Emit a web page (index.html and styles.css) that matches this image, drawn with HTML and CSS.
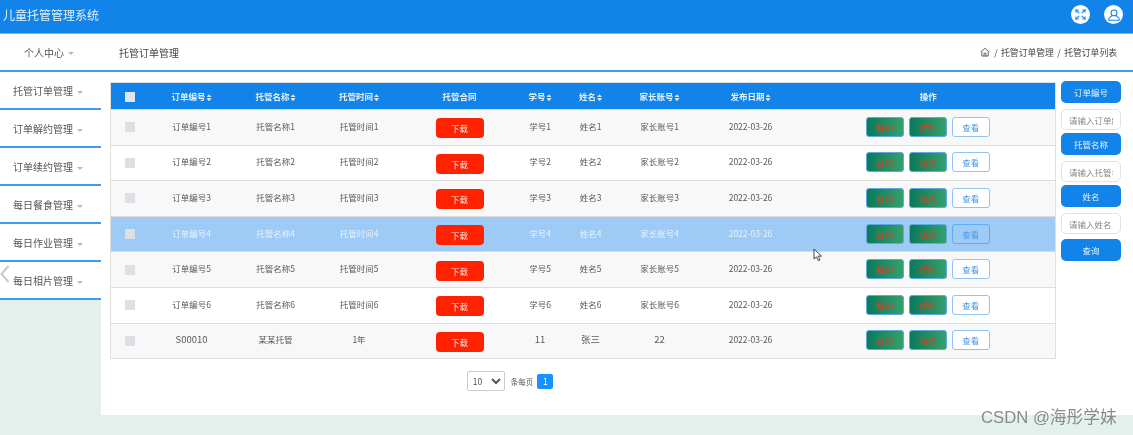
FILE: index.html
```html
<!DOCTYPE html>
<html lang="zh-CN">
<head>
    <meta charset="UTF-8" />
    <title>儿童托管管理系统</title>
    <link rel="stylesheet" href="styles.css">
</head>
<body>
<header class="topbar">
    <div class="brand">儿童托管管理系统</div>
    <div class="top-icons">
        <span class="round-icon">
            <svg viewBox="0 0 20 20" width="13" height="13" fill="none" stroke="#1283e8" stroke-width="1.6" stroke-linecap="round">
                <path d="M3 3l4.500 4.500M17 3l-4.500 4.500M3 17l4.500-4.500M17 17l-4.500-4.500" />
                <path d="M3 6.500V3h3.500M17 6.500V3h-3.500M3 13.500V17h3.500M17 13.500V17h-3.500" />
            </svg>
        </span>
        <span class="round-icon">
            <svg viewBox="0 0 20 20" width="14" height="14" fill="none" stroke="#1283e8" stroke-width="1.5" stroke-linejoin="round">
                <circle cx="10" cy="7" r="4.200" />
                <path d="M7 10.500c0 2-4.500 2.500-4.500 5.500v1.500h15V16c0-3-4.500-3.500-4.500-5.500" />
            </svg>
        </span>
    </div>
</header>

<div class="subbar">
    <div class="user-menu">个人中心<i class="caret"></i></div>
    <div class="page-title">托管订单管理</div>
    <div class="crumbs">
        <svg viewBox="0 0 16 16" width="10" height="10" fill="none" stroke="#555" stroke-width="1.400">
            <path d="M1 8l7-6 7 6M3 7v7.500h10V7M6.500 14.500V10h3v4.500" />
        </svg>
        <span>/ 托管订单管理 / 托管订单列表</span>
    </div>
</div>

<div class="layout">
    <aside class="sidebar">
        <div class="side-item">托管订单管理<i class="caret"></i></div>
        <div class="side-item">订单解约管理<i class="caret"></i></div>
        <div class="side-item">订单续约管理<i class="caret"></i></div>
        <div class="side-item">每日餐食管理<i class="caret"></i></div>
        <div class="side-item">每日作业管理<i class="caret"></i></div>
        <div class="side-item">每日相片管理<i class="caret"></i></div>
    </aside>

    <main class="content">
        <div class="table-area">
            <table class="orders">
                <colgroup>
                    <col class="c-check"><col class="c-no"><col class="c-name"><col class="c-time"><col class="c-file">
                    <col class="c-sid"><col class="c-stu"><col class="c-parent"><col class="c-date"><col class="c-ops">
                </colgroup>
                <thead>
                    <tr>
                        <th><span class="check"></span></th>
                        <th>订单编号<i class="sort"></i></th>
                        <th>托管名称<i class="sort"></i></th>
                        <th>托管时间<i class="sort"></i></th>
                        <th>托管合同</th>
                        <th>学号<i class="sort"></i></th>
                        <th>姓名<i class="sort"></i></th>
                        <th>家长账号<i class="sort"></i></th>
                        <th>发布日期<i class="sort"></i></th>
                        <th>操作</th>
                    </tr>
                </thead>
                <tbody>
                    <tr>
                        <td><span class="check"></span></td><td>订单编号1</td><td>托管名称1</td><td>托管时间1</td>
                        <td><button class="btn-down">下载</button></td>
                        <td>学号1</td><td>姓名1</td><td>家长账号1</td><td>2022-03-26</td>
                        <td><div class="ops"><button class="btn-green">解约</button><button class="btn-green">续约</button><button class="btn-view">查看</button></div></td>
                    </tr>
                    <tr>
                        <td><span class="check"></span></td><td>订单编号2</td><td>托管名称2</td><td>托管时间2</td>
                        <td><button class="btn-down">下载</button></td>
                        <td>学号2</td><td>姓名2</td><td>家长账号2</td><td>2022-03-26</td>
                        <td><div class="ops"><button class="btn-green">解约</button><button class="btn-green">续约</button><button class="btn-view">查看</button></div></td>
                    </tr>
                    <tr>
                        <td><span class="check"></span></td><td>订单编号3</td><td>托管名称3</td><td>托管时间3</td>
                        <td><button class="btn-down">下载</button></td>
                        <td>学号3</td><td>姓名3</td><td>家长账号3</td><td>2022-03-26</td>
                        <td><div class="ops"><button class="btn-green">解约</button><button class="btn-green">续约</button><button class="btn-view">查看</button></div></td>
                    </tr>
                    <tr class="hovered">
                        <td><span class="check"></span></td><td>订单编号4</td><td>托管名称4</td><td>托管时间4</td>
                        <td><button class="btn-down">下载</button></td>
                        <td>学号4</td><td>姓名4</td><td>家长账号4</td><td>2022-03-26</td>
                        <td><div class="ops"><button class="btn-green">解约</button><button class="btn-green">续约</button><button class="btn-view">查看</button></div></td>
                    </tr>
                    <tr>
                        <td><span class="check"></span></td><td>订单编号5</td><td>托管名称5</td><td>托管时间5</td>
                        <td><button class="btn-down">下载</button></td>
                        <td>学号5</td><td>姓名5</td><td>家长账号5</td><td>2022-03-26</td>
                        <td><div class="ops"><button class="btn-green">解约</button><button class="btn-green">续约</button><button class="btn-view">查看</button></div></td>
                    </tr>
                    <tr>
                        <td><span class="check"></span></td><td>订单编号6</td><td>托管名称6</td><td>托管时间6</td>
                        <td><button class="btn-down">下载</button></td>
                        <td>学号6</td><td>姓名6</td><td>家长账号6</td><td>2022-03-26</td>
                        <td><div class="ops"><button class="btn-green">解约</button><button class="btn-green">续约</button><button class="btn-view">查看</button></div></td>
                    </tr>
                    <tr>
                        <td><span class="check"></span></td><td class="big">S00010</td><td>某某托管</td><td>1年</td>
                        <td><button class="btn-down">下载</button></td>
                        <td class="big">11</td><td class="big">张三</td><td class="big">22</td><td>2022-03-26</td>
                        <td><div class="ops"><button class="btn-green">解约</button><button class="btn-green">续约</button><button class="btn-view">查看</button></div></td>
                    </tr>
                </tbody>
            </table>

            <div class="pager">
                <select class="page-size"><option>10</option></select>
                <span class="pager-text">条每页</span>
                <span class="page-num">1</span>
            </div>
        </div>

        <div class="search">
            <div class="search-label">订单编号</div>
            <input class="search-input" placeholder="请输入订单编号">
            <div class="search-label">托管名称</div>
            <input class="search-input" placeholder="请输入托管名称">
            <div class="search-label">姓名</div>
            <input class="search-input" placeholder="请输入姓名">
            <button class="search-btn">查询</button>
        </div>
    </main>
</div>

<div class="collapse-arrow">
    <svg viewBox="0 0 10 18" width="10" height="18" fill="none" stroke="#c9cdcf" stroke-width="2.400"><path d="M8.500 1L1.500 9l7 8" /></svg>
</div>
<div class="mouse">
    <svg viewBox="0 0 10 14" width="10" height="14" fill="#fff" stroke="#444" stroke-width="1"><path d="M1 1v10l2.500-2.200 1.800 3.900 1.700-.8-1.800-3.800H8.500z" /></svg>
</div>
<div class="watermark">CSDN @海彤学妹</div>
</body>
</html>
```

FILE: styles.css
```css
* {
    box-sizing: border-box;
}

html, body {
    height: 100%;
}

body {
    margin: 0;
    overflow: hidden;
    display: flex;
    flex-direction: column;
    background-color: #e4f0ec;
    color: #5a5a5a;
    font-family: "Noto Sans CJK SC", "Open Sans", sans-serif;
    font-size: 8.5px;
}

/* the reference is a soft, rescaled capture */
body > * {
    filter: blur(0.45px);
}

.topbar {
    height: 34px;
    flex: none;
    display: flex;
    align-items: center;
    justify-content: space-between;
    padding: 0 10px 4px 3px;
    background-color: #1283e8;
    border-bottom: 1px solid #6db3f2;
}

.brand {
    color: #e4f1fc;
    font-size: 12px;
}

.top-icons {
    display: flex;
    gap: 14px;
}

.round-icon {
    width: 19px;
    height: 19px;
    display: flex;
    align-items: center;
    justify-content: center;
    background-color: #fff;
    border-radius: 50%;
}

.subbar {
    height: 38px;
    flex: none;
    display: flex;
    align-items: center;
    background-color: #fff;
    border-bottom: 2px solid #3d9bf0;
    font-size: 10px;
    color: #444;
}

.user-menu {
    width: 119px;
    padding-left: 24px;
    color: #555;
}

.crumbs {
    margin-left: auto;
    padding-right: 16px;
    display: flex;
    align-items: center;
    gap: 4px;
    font-size: 8.8px;
    word-spacing: 1.5px;
}

.caret {
    display: inline-block;
    margin-left: 4px;
    vertical-align: middle;
    border-top: 3px solid #bbb;
    border-left: 3px solid transparent;
    border-right: 3px solid transparent;
}

.layout {
    height: 343px;
    flex: none;
    display: flex;
}

.sidebar {
    width: 101px;
    flex: none;
}

.side-item {
    height: 38px;
    padding: 11px 0 0 13px;
    background-color: #fff;
    border-bottom: 2px solid #3d9bf0;
    font-size: 10px;
    color: #555;
}

.content {
    flex: 1;
    display: flex;
    gap: 6px;
    padding: 10px 12px 0 9px;
    background-color: #fff;
}

.table-area {
    width: 945px;
    flex: none;
}

.orders {
    width: 945px;
    table-layout: fixed;
    border-collapse: collapse;
    border: 1px solid #e0e0e0;
    text-align: center;
}

.c-check { width: 39px; }
.c-no { width: 84px; }
.c-name { width: 84px; }
.c-time { width: 83px; }
.c-file { width: 118px; }
.c-sid { width: 43px; }
.c-stu { width: 58px; }
.c-parent { width: 80px; }
.c-date { width: 102px; }
.c-ops { width: 254px; }

.orders th {
    height: 27px;
    padding: 0;
    background-color: #1283e8;
    color: #e4f1fc;
    font-weight: bold;
}

.orders td {
    height: 35.6px;
    padding: 0 0 3px;
    border-top: 1px solid #ddd;
}

.orders tbody tr:nth-child(odd) {
    background-color: #f8f8f8;
}

.orders tbody tr.hovered {
    background-color: #9dcbf5;
    color: #e6f2fc;
}

.big {
    font-size: 9.5px;
}

.check {
    display: inline-block;
    width: 10px;
    height: 10px;
    vertical-align: middle;
    background-color: #dcdfe4;
}

th .check {
    background-color: #e2e6ea;
}

.sort {
    display: inline-block;
    margin-left: 1px;
    vertical-align: middle;
    width: 5px;
    height: 7px;
    background: linear-gradient(#cfe6fb 0 3px, transparent 3px 4px, #cfe6fb 4px);
    clip-path: polygon(50% 0, 100% 40%, 60% 50%, 100% 60%, 50% 100%, 0 60%, 40% 50%, 0 40%);
}

button {
    font-family: inherit;
    font-size: 8.5px;
    padding: 0;
    cursor: pointer;
}

.btn-down {
    width: 48px;
    height: 20px;
    margin-top: 5px;
    vertical-align: middle;
    background-color: #ff2200;
    color: #fbe3dd;
    border: 0;
    border-radius: 4px;
}

.ops {
    display: flex;
    justify-content: center;
    gap: 5px;
    padding: 2px 1px 0 0;
}

.ops button {
    width: 38px;
    height: 20px;
    border-radius: 3px;
}

.btn-green {
    background: linear-gradient(90deg, #0a7a5c, #35a06c);
    border: 1px solid #5fa9df;
    color: #e83a1c;
}

.btn-view {
    background-color: #fff;
    border: 1.5px solid #8fc3f0;
    color: #4a9be6;
}

.hovered .btn-view {
    background-color: #9dcbf5;
    border-color: #62acec;
}

.pager {
    display: flex;
    align-items: center;
    justify-content: center;
    margin-top: 12px;
    padding-right: 145px;
}

.page-size {
    width: 38px;
    height: 20px;
    padding: 0 0 0 1px;
    font-family: inherit;
    font-size: 8.5px;
    color: #555;
    background-color: #fff;
    border: 1px solid #ccc;
    border-radius: 2px;
}

.pager-text {
    margin: 0 4px 0 6px;
    font-size: 7.5px;
}

.page-num {
    width: 16px;
    height: 15px;
    display: flex;
    align-items: center;
    justify-content: center;
    background-color: #1890ff;
    color: #fff;
    border-radius: 2px;
}

.search {
    width: 60px;
    flex: none;
    display: flex;
    flex-direction: column;
    margin-top: -1px;
}

.search-label,
.search-btn {
    height: 22px;
    flex: none;
    display: flex;
    align-items: center;
    justify-content: center;
    background-color: #1283e8;
    color: #e4f1fc;
    border: 0;
    border-radius: 5px;
    font-size: 8.5px;
}

.search-input {
    width: 60px;
    height: 21px;
    flex: none;
    margin: 6px 0 3px;
    padding: 0 7px;
    font-family: inherit;
    font-size: 8.5px;
    border: 1px solid #e2e2e2;
    border-radius: 5px;
    outline: none;
}

.search-input::placeholder {
    color: #888;
}

.search-btn {
    margin-top: 2px;
}

.collapse-arrow {
    position: absolute;
    left: 0;
    top: 265px;
}

.mouse {
    position: absolute;
    left: 813px;
    top: 248px;
}

.watermark {
    position: absolute;
    left: 981px;
    top: 404px;
    color: #8a8a8a;
    font-size: 16.7px;
    font-family: "Liberation Sans", "Noto Sans CJK SC", sans-serif;
}
```
